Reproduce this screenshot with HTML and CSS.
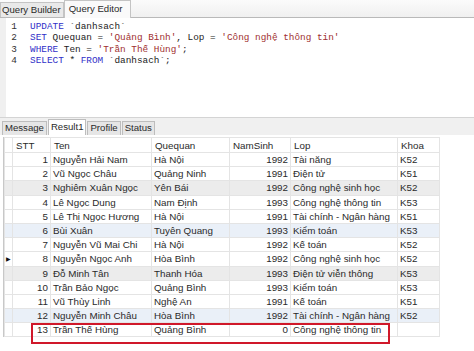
FILE: index.html
```html
<!DOCTYPE html>
<html lang="vi">
<head>
  <meta charset="UTF-8">
  <title>Query Editor</title>
  <link rel="stylesheet" href="styles.css">
</head>
<body>
  <!-- Tab tren -->
  <div class="top-tabs">
    <div class="tab">Query Builder</div>
    <div class="tab active">Query Editor</div>
  </div>

  <!-- Editor -->
  <div class="editor">
    <div class="gutter"></div>
    <div class="code">
      <div class="line"><span class="num">1</span><span class="kw">UPDATE</span> `danhsach`</div>
      <div class="line"><span class="num">2</span><span class="kw">SET</span> Quequan = <span class="str">'Quảng Bình'</span>, Lop = <span class="str">'Công nghệ thông tin'</span></div>
      <div class="line"><span class="num">3</span><span class="kw">WHERE</span> Ten = <span class="str">'Trần Thế Hùng'</span>;</div>
      <div class="line"><span class="num">4</span><span class="kw">SELECT</span> * <span class="kw">FROM</span> `danhsach`;</div>
    </div>
  </div>

  <!-- Tab ket qua -->
  <div class="result-tabs">
    <div class="rtab">Message</div>
    <div class="rtab active">Result1</div>
    <div class="rtab">Profile</div>
    <div class="rtab">Status</div>
  </div>

  <!-- Bang -->
  <div class="grid-wrap">
    <table class="grid">
      <thead>
        <tr>
          <th class="ind"></th>
          <th class="c-stt">STT</th>
          <th class="c-ten">Ten</th>
          <th class="c-que">Quequan</th>
          <th class="c-nam">NamSinh</th>
          <th class="c-lop">Lop</th>
          <th class="c-khoa">Khoa</th>
        </tr>
      </thead>
      <tbody>
        <tr><td class="ind"></td><td class="r">1</td><td>Nguyễn Hải Nam</td><td>Hà Nội</td><td class="r">1992</td><td>Tài năng</td><td>K52</td></tr>
        <tr><td class="ind"></td><td class="r">2</td><td>Vũ Ngọc Châu</td><td>Quảng Ninh</td><td class="r">1991</td><td>Điện tử</td><td>K51</td></tr>
        <tr class="gray"><td class="ind"></td><td class="r">3</td><td>Nghiêm Xuân Ngọc</td><td>Yên Bái</td><td class="r">1992</td><td>Công nghệ sinh học</td><td>K52</td></tr>
        <tr><td class="ind"></td><td class="r">4</td><td>Lê Ngọc Dung</td><td>Nam Định</td><td class="r">1993</td><td>Công nghệ thông tin</td><td>K53</td></tr>
        <tr><td class="ind"></td><td class="r">5</td><td>Lê Thị Ngọc Hương</td><td>Hà Nội</td><td class="r">1991</td><td>Tài chính - Ngân hàng</td><td>K51</td></tr>
        <tr class="blue"><td class="ind"></td><td class="r">6</td><td>Bùi Xuân</td><td>Tuyên Quang</td><td class="r">1993</td><td>Kiểm toán</td><td>K53</td></tr>
        <tr><td class="ind"></td><td class="r">7</td><td>Nguyễn Vũ Mai Chi</td><td>Hà Nội</td><td class="r">1992</td><td>Kế toán</td><td>K52</td></tr>
        <tr><td class="ind">&#9654;</td><td class="r">8</td><td>Nguyễn Ngọc Anh</td><td>Hòa Bình</td><td class="r">1992</td><td>Công nghệ sinh học</td><td>K52</td></tr>
        <tr class="gray"><td class="ind"></td><td class="r">9</td><td>Đỗ Minh Tân</td><td>Thanh Hóa</td><td class="r">1993</td><td>Điện tử viễn thông</td><td>K53</td></tr>
        <tr><td class="ind"></td><td class="r">10</td><td>Trần Bảo Ngọc</td><td>Quảng Bình</td><td class="r">1993</td><td>Kiểm toán</td><td>K53</td></tr>
        <tr><td class="ind"></td><td class="r">11</td><td>Vũ Thùy Linh</td><td>Nghệ An</td><td class="r">1991</td><td>Kế toán</td><td>K51</td></tr>
        <tr class="blue"><td class="ind"></td><td class="r">12</td><td>Nguyễn Minh Châu</td><td>Hòa Bình</td><td class="r">1992</td><td>Tài chính - Ngân hàng</td><td>K52</td></tr>
        <tr><td class="ind"></td><td class="r">13</td><td>Trần Thế Hùng</td><td>Quảng Bình</td><td class="r">0</td><td>Công nghệ thông tin</td><td></td></tr>
      </tbody>
    </table>
    <div class="highlight"></div>
  </div>
</body>
</html>
```

FILE: styles.css
```css
body {
  margin: 0;
  background: white;
  color: #2a2a2a;
  font-family: "Liberation Sans", Arial, sans-serif;
  font-size: 9.8px;
  overflow: hidden;
  width: 474px;
  height: 351px;
}

/* tab tren */
.top-tabs {
  display: flex;
  align-items: flex-end;
  height: 18px;
  background: linear-gradient(#fbfbfb, #f0f0f0);
  border-bottom: 1px solid #b9b9b9;
  box-sizing: border-box;
}

.tab {
  height: 15px;
  line-height: 14px;
  padding: 0 2px 0 1px;
  background: #e9e9e9;
  border: 1px solid #c4c4c4;
  border-bottom: none;
  box-sizing: border-box;
  font-size: 9.6px;
}

.tab.active {
  height: 18px;
  line-height: 15px;
  padding: 0 7px 0 4px;
  background: #fafafa;
  margin-bottom: -1px;
}

/* editor */
.editor {
  display: flex;
  height: 99px;
  background: white;
  border-bottom: 1px solid #d4d4d4;
}

.gutter {
  width: 6px;
  background: #f0f0f0;
}

.code {
  padding-top: 3px;
  font-family: "Liberation Mono", "Courier New", monospace;
  font-size: 9.4px;
  color: #222;
}

.line {
  height: 11.3px;
  line-height: 11.3px;
  white-space: pre;
}

.num {
  display: inline-block;
  width: 11px;
  margin-right: 13px;
  text-align: right;
  color: #333;
}

.kw {
  color: #3030c8;
}

.str {
  color: #a03030;
}

/* tab ket qua */
.result-tabs {
  display: flex;
  align-items: flex-end;
  height: 17px;
  padding-left: 2px;
  background: #f0f0f0;
}

.rtab {
  height: 13px;
  line-height: 12px;
  padding: 0 2px;
  background: #e6e6e6;
  border: 1px solid #bdbdbd;
  border-bottom: none;
  margin-right: 1px;
  font-size: 9.6px;
}

.rtab.active {
  height: 15px;
  line-height: 13px;
  background: white;
}

/* bang */
.grid-wrap {
  position: relative;
  height: 200px;
  border-left: 1px solid #c8c8c8;
  margin-left: 3px;
}

.grid {
  border-collapse: collapse;
  table-layout: fixed;
  margin-top: 2px;
}

.grid th,
.grid td {
  height: 14.2px;
  padding: 0 2px;
  border: 1px solid #e4e4e4;
  text-align: left;
  font-weight: normal;
  white-space: nowrap;
  overflow: hidden;
  box-sizing: border-box;
}

.grid th {
  height: 15px;
  padding-left: 3px;
}

.grid td.r {
  text-align: right;
}

.grid .ind {
  width: 8px;
  padding: 0;
  font-size: 6px;
  text-align: center;
  color: #111;
}

.c-stt { width: 38px; }
.c-ten { width: 101px; }
.c-que { width: 78px; }
.c-nam { width: 61px; }
.c-lop { width: 107px; }
.c-khoa { width: 42px; }

.grid tr.gray td {
  background: #ececec;
}

.grid tr.blue td {
  background: #eaf0f8;
}

.highlight {
  position: absolute;
  left: 27px;
  top: 186px;
  width: 359px;
  height: 21px;
  border: 2px solid #d0182a;
  box-sizing: border-box;
}
```
